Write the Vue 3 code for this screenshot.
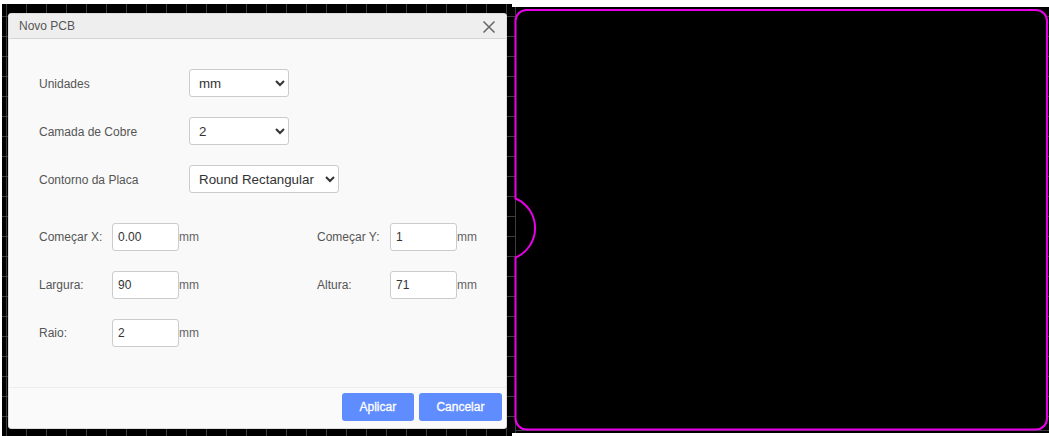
<script setup>
import { ref } from 'vue';

const units = ref('mm');
const layers = ref('2');
const outline = ref('Round Rectangular');

const coords = ref([
  { label: 'Começar X:', value: '0.00' },
  { label: 'Começar Y:', value: '1' },
  { label: 'Largura:', value: '90' },
  { label: 'Altura:', value: '71' },
  { label: 'Raio:', value: '2' }
]);
</script>

<template>
  <div class="page">
    <div class="left-pane">
      <div class="dialog">
        <div class="dialog-header">
          <span class="dialog-title">Novo PCB</span>
          <svg class="close-btn" width="14" height="14" viewBox="0 0 14 14">
            <path d="M1.5 1.5 L12.5 12.5 M12.5 1.5 L1.5 12.5" stroke="#666" stroke-width="1.5" fill="none" />
          </svg>
        </div>
        <div class="dialog-body">
          <div class="select-row">
            <label>Unidades</label>
            <select v-model="units" class="small-select">
              <option>mm</option>
              <option>inch</option>
            </select>
          </div>
          <div class="select-row">
            <label>Camada de Cobre</label>
            <select v-model="layers" class="small-select">
              <option>2</option>
              <option>4</option>
            </select>
          </div>
          <div class="select-row">
            <label>Contorno da Placa</label>
            <select v-model="outline" class="wide-select">
              <option>Round Rectangular</option>
              <option>Rectangular</option>
            </select>
          </div>
          <div class="coord-grid">
            <div class="coord" v-for="item in coords" :key="item.label">
              <label>{{ item.label }}</label>
              <input type="text" v-model="item.value">
              <span class="unit">mm</span>
            </div>
          </div>
        </div>
        <div class="dialog-footer">
          <button class="btn">Aplicar</button>
          <button class="btn">Cancelar</button>
        </div>
      </div>
    </div>
    <div class="right-pane">
      <svg width="537" height="426" viewBox="0 0 537 426">
        <rect x="3.5" y="3" width="531.5" height="419.5" fill="black" />
        <path d="M3.5 0 V426 M3.5 423.5 H537" stroke="#3c3c3c" stroke-width="1" fill="none" />
        <path
          class="board"
          d="M14.5 3 H524 A11 11 0 0 1 535 14 V411.5 A11 11 0 0 1 524 422.5 H14.5 A11 11 0 0 1 3.5 411.5 V250.5 A32 32 0 0 0 3.5 191.5 V14 A11 11 0 0 1 14.5 3 Z"
        />
      </svg>
    </div>
  </div>
</template>

<style scoped>
.page {
  display: flex;
  align-items: flex-start;
  width: 1049px;
  height: 436px;
  overflow: hidden;
  background-color: white;
  font-family: "Liberation Sans", Arial, sans-serif;
}

.left-pane {
  box-sizing: border-box;
  width: 510px;
  height: 432px;
  margin: 4px 0 0 2px;
  padding: 9px 5px 7px 6px;
  background-color: black;
  background-image:
    linear-gradient(to right, #3c3c3c 1px, transparent 1px),
    linear-gradient(to bottom, #3c3c3c 1px, transparent 1px);
  background-size: 20px 20px;
  background-position: 4px 12px;
}

.dialog {
  box-sizing: border-box;
  display: flex;
  flex-direction: column;
  width: 499px;
  height: 416px;
  border: 1px solid #ddd;
  border-radius: 3px;
  background-color: #fafafa;
}

.dialog-header {
  display: flex;
  align-items: center;
  justify-content: space-between;
  height: 24px;
  padding: 0 10px 0 10px;
  border-bottom: 1px solid #d5d5d5;
  background-color: #eee;
}

.dialog-title {
  font-size: 12px;
  color: #555;
}

.close-btn {
  margin-top: 1px;
}

.dialog-body {
  flex: 1;
  padding: 30px 30px 0;
  background-color: #f9f9f9;
}

.select-row {
  display: flex;
  align-items: center;
  height: 28px;
  margin-bottom: 20px;
}

.select-row label {
  width: 150px;
  padding-top: 2px;
}

label {
  font-size: 12px;
  color: #555;
}

select {
  box-sizing: border-box;
  height: 28px;
  padding: 0 5px;
  border: 1px solid #ccc;
  border-radius: 3px;
  background-color: white;
  font-family: "Liberation Sans", Arial, sans-serif;
  font-size: 13.333px;
  color: #333;
}

.small-select {
  width: 100px;
}

.wide-select {
  width: 150px;
}

.coord-grid {
  display: grid;
  grid-template-columns: 278px 1fr;
  row-gap: 20px;
  margin-top: 30px;
}

.coord {
  display: flex;
  align-items: center;
  height: 28px;
}

.coord label {
  width: 73px;
}

.coord input {
  box-sizing: border-box;
  width: 67px;
  height: 28px;
  padding: 0 5px;
  border: 1px solid #ccc;
  border-radius: 3px;
  outline: none;
  background-color: white;
  font-family: "Liberation Sans", Arial, sans-serif;
  font-size: 12px;
  color: #333;
}

.unit {
  font-size: 12px;
  color: #666;
}

.dialog-footer {
  display: flex;
  justify-content: flex-end;
  gap: 5px;
  height: 35px;
  padding: 5px 4px 0 0;
  border-top: 1px solid #eee;
}

.btn {
  height: 28px;
  padding: 0 17.6px;
  border: none;
  border-radius: 3px;
  background-color: #5f8dff;
  font-family: "Liberation Sans", Arial, sans-serif;
  font-size: 12px;
  -webkit-text-stroke: 0.3px white;
  color: white;
}

.right-pane {
  width: 537px;
  height: 426px;
  margin-top: 7px;
  background-color: black;
  background-image: linear-gradient(to bottom, #3c3c3c 1px, transparent 1px);
  background-size: 20px 20px;
  background-position: 0 9px;
}

.right-pane svg {
  display: block;
}

.board {
  fill: none;
  stroke: #e900e9;
  stroke-width: 2;
}
</style>
